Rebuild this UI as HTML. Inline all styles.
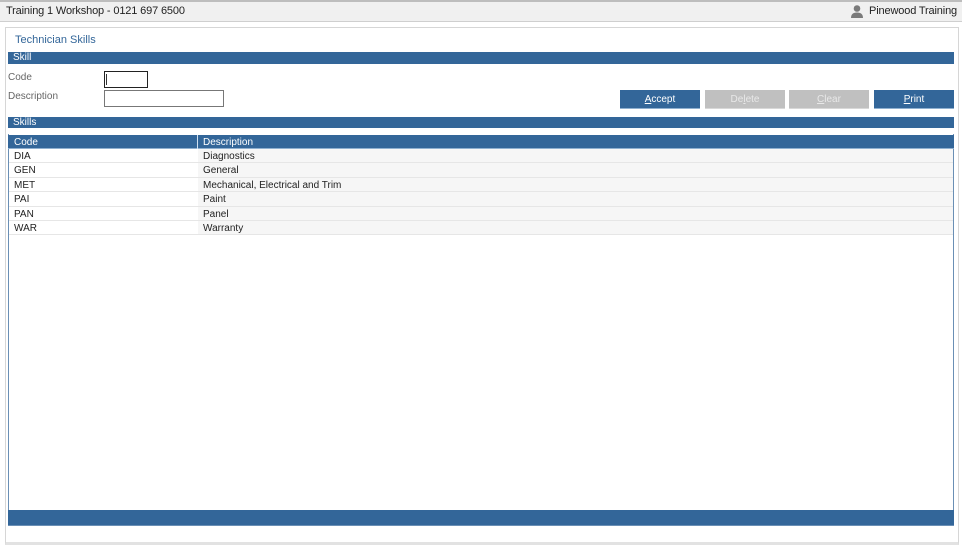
<!DOCTYPE html>
<html><head><meta charset="utf-8"><style>
*{margin:0;padding:0;box-sizing:border-box}
body{width:962px;height:549px;background:#fff;font-family:"Liberation Sans",sans-serif;position:relative;overflow:hidden;font-size:10px;color:#222;white-space:nowrap}
.abs{position:absolute}
.top{left:0;top:0;width:962px;height:22px;background:#f0f0f0;border-top:2px solid #bdbdbd;border-bottom:1px solid #cfcfcf}
.panel{left:5px;top:27px;width:954px;height:518px;border:1px solid #d6d6d6;border-bottom:3px solid #e2e2e2}
.bar{background:#336699;color:#fff;font-size:10px;line-height:12px;padding-left:5px}
.btn{height:19px;color:#fff;text-align:center;line-height:19px;font-size:10px;border-bottom:1px solid #8fb0d0}
.lbl{color:#666;font-size:10px}
.row{position:absolute;left:9px;width:944px;height:14.4px;border-bottom:1px solid #e6e6e6;font-size:10px;line-height:15px}
.row span{position:absolute;top:0}
.row .d{left:189px;right:0;background:#f6f6f6;padding-left:5px;height:100%}
.tt{font-size:11px;letter-spacing:-0.15px;color:#222}
</style></head><body>
<div class="abs top"></div>
<div class="abs tt" style="left:6px;top:5px">Training 1 Workshop - 0121 697 6500</div>
<svg class="abs" style="left:850px;top:4px" width="14" height="14" viewBox="0 0 14 14"><circle cx="7" cy="4.5" r="3.3" fill="#7a7a7a"/><path d="M1 14 Q1 8.5 7 8.5 Q13 8.5 13 14Z" fill="#7a7a7a"/></svg>
<div class="abs tt" style="right:5px;top:5px">Pinewood Training</div>
<div class="abs panel"></div>
<div class="abs" style="left:15px;top:34px;font-size:11px;color:#336699">Technician Skills</div>
<div class="abs bar" style="left:8px;top:52px;width:946px;height:12px">Skill</div>
<div class="abs lbl" style="left:8px;top:72px">Code</div>
<div class="abs lbl" style="left:8px;top:91px">Description</div>
<div class="abs" style="left:104px;top:71px;width:44px;height:17px;border:1px solid #222"></div>
<div class="abs" style="left:106px;top:74px;width:1px;height:11px;background:#333"></div>
<div class="abs" style="left:104px;top:90px;width:120px;height:17px;border:1px solid #777"></div>
<div class="abs btn" style="left:620px;top:90px;width:80px;background:#336699"><u>A</u>ccept</div>
<div class="abs btn" style="left:705px;top:90px;width:80px;background:#c0c0c0;color:#e8e8e8;border-bottom-color:#d8d8d8">De<u>l</u>ete</div>
<div class="abs btn" style="left:789px;top:90px;width:80px;background:#c0c0c0;color:#e8e8e8;border-bottom-color:#d8d8d8"><u>C</u>lear</div>
<div class="abs btn" style="left:874px;top:90px;width:80px;background:#336699"><u>P</u>rint</div>
<div class="abs bar" style="left:8px;top:117px;width:946px;height:11px">Skills</div>
<div class="abs" style="left:8px;top:134px;width:946px;height:392px;border:1px solid #6a8fb5;border-top:none"></div>
<div class="abs bar" style="left:8px;top:135px;width:946px;height:14px;line-height:14px;border-bottom:1px solid #8fb0d0"></div>
<div class="abs" style="left:14px;top:137px;color:#fff;font-size:10px">Code</div>
<div class="abs" style="left:197px;top:135px;width:1px;height:14px;background:#cfe0f0"></div>
<div class="abs" style="left:203px;top:137px;color:#fff;font-size:10px">Description</div>
<div class="row" style="top:149px"><span style="left:5px">DIA</span><span class="d">Diagnostics</span></div>
<div class="row" style="top:163.4px"><span style="left:5px">GEN</span><span class="d">General</span></div>
<div class="row" style="top:177.8px"><span style="left:5px">MET</span><span class="d">Mechanical, Electrical and Trim</span></div>
<div class="row" style="top:192.2px"><span style="left:5px">PAI</span><span class="d">Paint</span></div>
<div class="row" style="top:206.6px"><span style="left:5px">PAN</span><span class="d">Panel</span></div>
<div class="row" style="top:221px"><span style="left:5px">WAR</span><span class="d">Warranty</span></div>
<div class="abs" style="left:8px;top:510px;width:946px;height:15px;background:#336699"></div>
</body></html>
